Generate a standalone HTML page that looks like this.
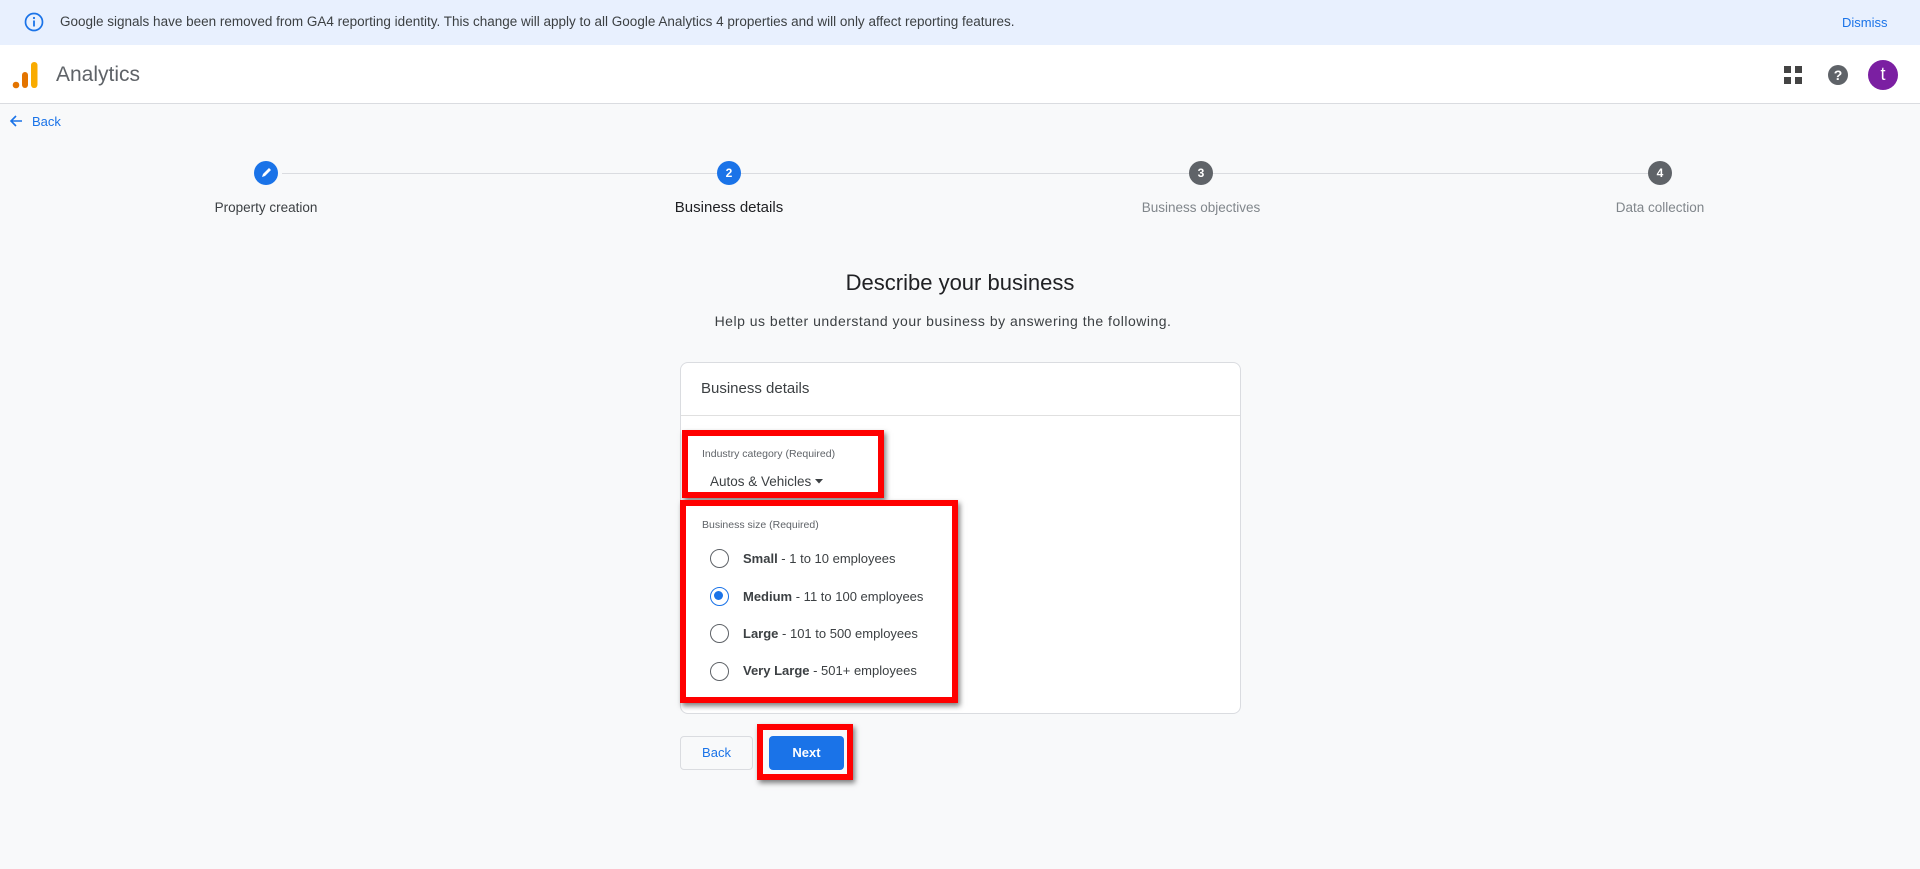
<!DOCTYPE html>
<html><head><meta charset="utf-8"><style>
*{margin:0;padding:0;box-sizing:border-box}
body{width:1920px;height:869px;background:#f8f9fa;font-family:"Liberation Sans",Arial,sans-serif;position:relative;overflow:hidden;color:#202124}
.a{position:absolute}
.banner{left:0;top:0;width:1920px;height:45px;background:#e8f0fe}
.hdr{left:0;top:45px;width:1920px;height:59px;background:#fff;border-bottom:1px solid #dadce0}
.circ{width:24px;height:24px;border-radius:50%;color:#fff;font-size:12px;font-weight:bold;text-align:center;line-height:24px}
.lbl{font-size:13.5px;transform:translateX(-50%);white-space:nowrap}
.radio{width:19px;height:19px;border:1.6px solid #5f6368;border-radius:50%}
.opt{font-size:13px;color:#3c4043}
.red{border:6px solid #f00;box-shadow:2px 3px 5px rgba(0,0,0,.5)}
</style></head><body>
<div class="a banner"></div>
<svg class="a" style="left:24px;top:12px" width="20" height="20" viewBox="0 0 20 20"><circle cx="10" cy="10" r="8.5" fill="none" stroke="#1a73e8" stroke-width="1.7"/><rect x="9.1" y="8.5" width="1.8" height="6" fill="#1a73e8"/><circle cx="10" cy="6" r="1.1" fill="#1a73e8"/></svg>
<div class="a" style="left:60px;top:14px;font-size:13.5px;color:#3c4043">Google signals have been removed from GA4 reporting identity. This change will apply to all Google Analytics 4 properties and will only affect reporting features.</div>
<div class="a" style="left:1842px;top:15px;font-size:13px;color:#1a73e8">Dismiss</div>
<div class="a hdr"></div>
<svg class="a" style="left:12px;top:60px" width="28" height="30" viewBox="0 0 28 30"><circle cx="4" cy="25" r="3.3" fill="#e37400"/><rect x="10" y="12" width="6" height="16" rx="3" fill="#e37400"/><rect x="19" y="2" width="6.5" height="26" rx="3.2" fill="#f9ab00"/></svg>
<div class="a" style="left:56px;top:63px;font-size:21px;color:#5f6368">Analytics</div>
<div class="a" style="left:1784px;top:66px;width:18px;height:18px"><div class="a" style="left:0;top:0;width:7px;height:7px;background:#444"></div><div class="a" style="left:11px;top:0;width:7px;height:7px;background:#444"></div><div class="a" style="left:0;top:11px;width:7px;height:7px;background:#444"></div><div class="a" style="left:11px;top:11px;width:7px;height:7px;background:#444"></div></div>
<div class="a" style="left:1828px;top:65px;width:20px;height:20px;border-radius:50%;background:#5f6368;color:#fff;font-weight:bold;font-size:14px;text-align:center;line-height:20px">?</div>
<div class="a" style="left:1868px;top:60px;width:30px;height:30px;border-radius:50%;background:#7b1fa2;color:#fff;font-size:18px;text-align:center;line-height:29px">t</div>
<svg class="a" style="left:9px;top:114px" width="14" height="14" viewBox="0 0 14 14"><path d="M13 7H2M7 2L2 7l5 5" fill="none" stroke="#1a73e8" stroke-width="1.6"/></svg>
<div class="a" style="left:32px;top:114px;font-size:13px;color:#1a73e8">Back</div>
<div class="a" style="left:282px;top:173px;width:1366px;height:1px;background:#dadce0"></div>
<div class="a circ" style="left:254px;top:161px;background:#1a73e8"><svg width="24" height="24" viewBox="0 0 24 24"><path d="M8 16l1-3 6-6 2 2-6 6z" fill="#fff"/></svg></div>
<div class="a circ" style="left:717px;top:161px;background:#1a73e8">2</div>
<div class="a circ" style="left:1189px;top:161px;background:#5f6368">3</div>
<div class="a circ" style="left:1648px;top:161px;background:#5f6368">4</div>
<div class="a lbl" style="left:266px;top:200px;color:#3c4043">Property creation</div>
<div class="a lbl" style="left:729px;top:199px;font-size:15px;color:#202124">Business details</div>
<div class="a lbl" style="left:1201px;top:200px;color:#80868b">Business objectives</div>
<div class="a lbl" style="left:1660px;top:200px;color:#80868b">Data collection</div>
<div class="a" style="left:0;width:1920px;text-align:center;top:270px;font-size:22px;color:#202124">Describe your business</div>
<div class="a" style="left:-17px;width:1920px;text-align:center;top:313px;font-size:14px;letter-spacing:0.5px;color:#3c4043">Help us better understand your business by answering the following.</div>
<div class="a" style="left:680px;top:362px;width:561px;height:352px;background:#fff;border:1px solid #dadce0;border-radius:8px"></div>
<div class="a" style="left:681px;top:415px;width:559px;height:1px;background:#e0e0e0"></div>
<div class="a" style="left:701px;top:380px;font-size:15px;color:#3c4043">Business details</div>
<div class="a red" style="left:682px;top:430px;width:202px;height:68px"></div>
<div class="a" style="left:702px;top:448px;font-size:10.5px;color:#5f6368">Industry category (Required)</div>
<div class="a" style="left:710px;top:474px;font-size:13.5px;color:#3c4043">Autos &amp; Vehicles</div>
<svg class="a" style="left:815px;top:479px" width="8" height="5"><path d="M0 0h8L4 4.5z" fill="#3c4043"/></svg>
<div class="a red" style="left:680px;top:500px;width:278px;height:203px"></div>
<div class="a" style="left:702px;top:519px;font-size:10.5px;color:#5f6368">Business size (Required)</div>
<div class="a radio" style="left:710px;top:549px"></div>
<div class="a radio" style="left:710px;top:587px;border-color:#1a73e8"><div style="width:9px;height:9px;border-radius:50%;background:#1a73e8;margin:3.4px"></div></div>
<div class="a radio" style="left:710px;top:624px"></div>
<div class="a radio" style="left:710px;top:662px"></div>
<div class="a opt" style="left:743px;top:551px"><b>Small</b> - 1 to 10 employees</div>
<div class="a opt" style="left:743px;top:589px"><b>Medium</b> - 11 to 100 employees</div>
<div class="a opt" style="left:743px;top:626px"><b>Large</b> - 101 to 500 employees</div>
<div class="a opt" style="left:743px;top:663px"><b>Very Large</b> - 501+ employees</div>
<div class="a" style="left:680px;top:736px;width:73px;height:34px;border:1px solid #dadce0;border-radius:4px;background:#f8f9fa;color:#1a73e8;font-size:13px;text-align:center;line-height:32px">Back</div>
<div class="a red" style="left:757px;top:724px;width:96px;height:56px"></div>
<div class="a" style="left:769px;top:736px;width:75px;height:34px;border-radius:4px;background:#1a73e8;color:#fff;font-size:13px;font-weight:bold;text-align:center;line-height:34px">Next</div>
</body></html>
